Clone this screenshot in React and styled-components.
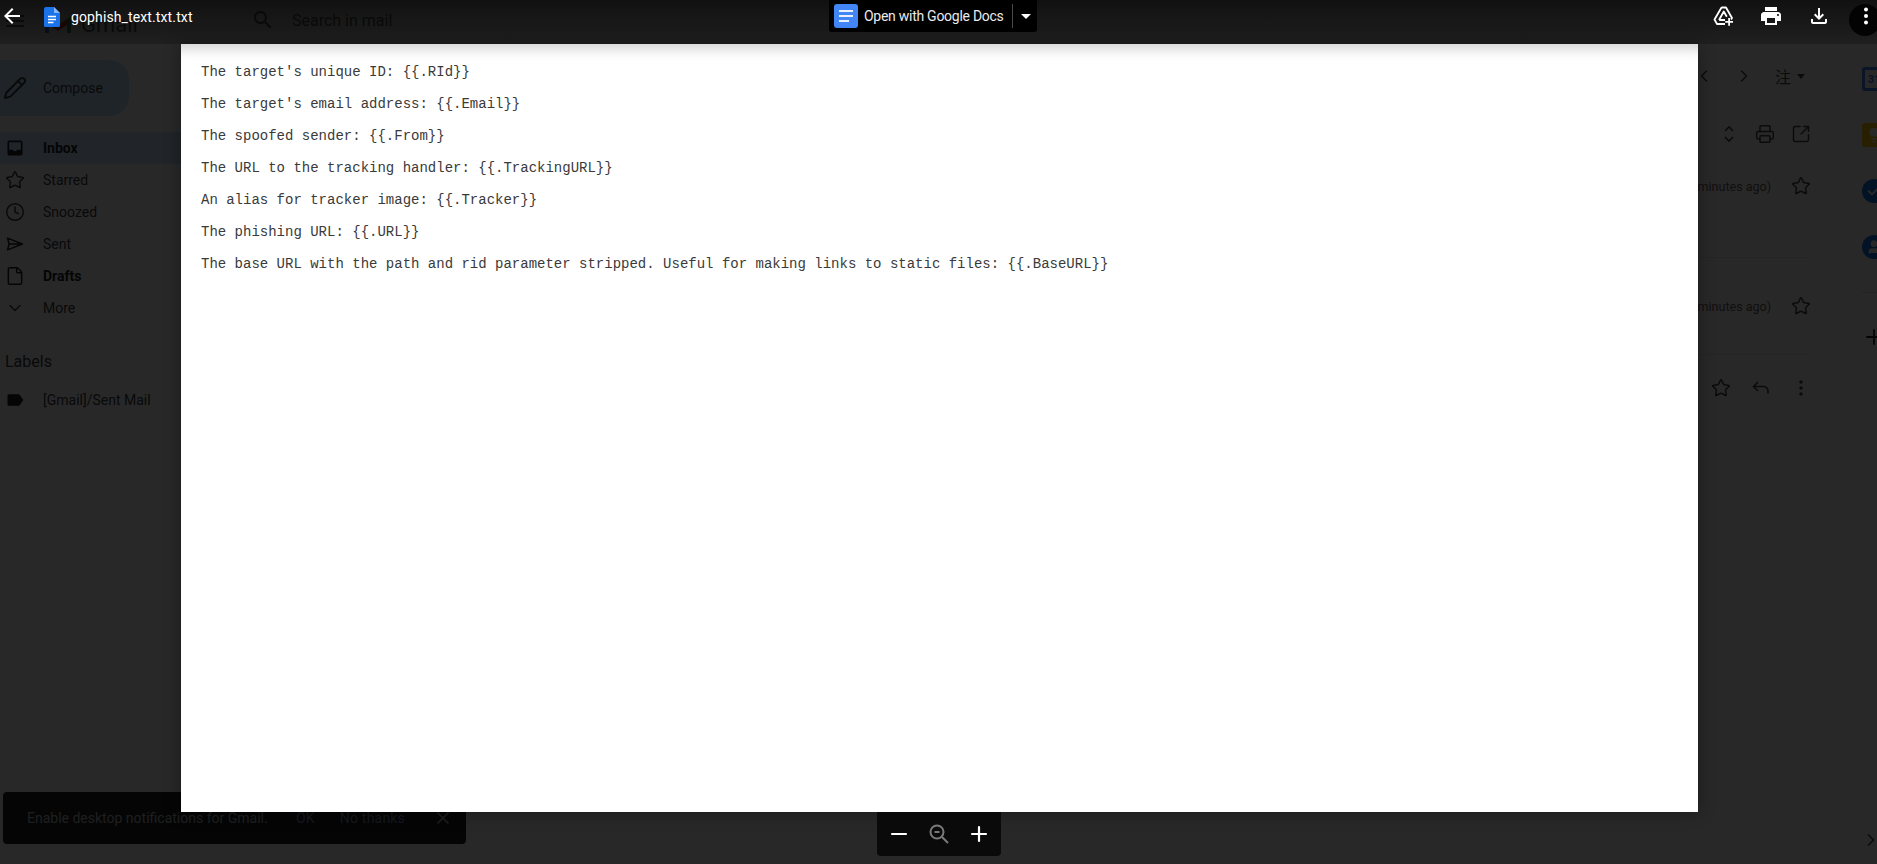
import React from "react";
import styled, { createGlobalStyle } from "styled-components";
import { Clock, File, ChevronDown, ChevronLeft, ChevronRight, Pencil, Star, SquareArrowOutUpRight, Plus, Minus, X, Printer, Check, User, Lightbulb } from "lucide-react";

const Global = createGlobalStyle`
  html, body { margin: 0; padding: 0; height: 100%; overflow: hidden; background: #fff; }
  #root { height: 864px; overflow: hidden; }
  * { box-sizing: border-box; }
`;

const Page = styled.div`
  position: relative;
  width: 1877px;
  height: 864px;
  overflow: hidden;
  background: #fff;
  color: #202124;
  font-family: Roboto, "Noto Sans", sans-serif;
`;

/* --- Gmail behind the viewer --- */
const GmailHeader = styled.header`
  height: 40px;
  display: flex;
  align-items: center;
  padding-left: 3px;
`;
const Burger = styled.svg`
  width: 24px;
  height: 24px;
  fill: #5f6368;
  margin-top: 2px;
`;
const Logo = styled.svg`
  width: 30px;
  height: 24px;
  margin: 6px 0 0 16px;
`;
const LogoText = styled.span`
  font-size: 22px;
  color: #5f6368;
  margin: 8px 0 0 8px;
  width: 170px;
`;
const SearchGlyph = styled.svg`
  width: 24px;
  height: 24px;
  fill: #5f6368;
  margin-right: 17px;
`;
const SearchText = styled.span`
  font-size: 16px;
  color: #5f6368;
  flex: 1;
`;
const Avatar = styled.div`
  width: 32px;
  height: 32px;
  border-radius: 50%;
  background: #202124;
  margin-right: -4px;
`;
const GmailBody = styled.div`
  display: flex;
  height: 824px;
`;
const Sidebar = styled.nav`
  width: 200px;
  flex: none;
  padding-top: 20px;
`;
const Compose = styled.div`
  width: 129px;
  height: 56px;
  border-radius: 0 20px 20px 0;
  background: #c2e7ff;
  display: flex;
  align-items: center;
  gap: 16px;
  padding-left: 3px;
  margin-bottom: 16px;
  font-size: 14px;
  color: #3c4043;
`;
const NavRow = styled.div`
  height: 32px;
  display: flex;
  align-items: center;
  gap: 18px;
  padding-left: 5px;
  font-size: 14px;
  font-weight: ${(p) => (p.$bold ? 700 : 400)};
  color: ${(p) => (p.$bold ? "#202124" : "#3c4043")};
  background: ${(p) => (p.$active ? "#d3e3fd" : "transparent")};
  svg { width: 20px; height: 20px; flex: none; }
`;
const LabelsTitle = styled.div`
  font-size: 16px;
  line-height: 20px;
  padding: 28px 0 12px 5px;
  color: #3c4043;
`;
const Main = styled.main`
  flex: 1;
  min-width: 0;
  padding-right: 44px;
`;
const ToolRow = styled.div`
  height: ${(p) => p.$h}px;
  display: flex;
  align-items: center;
  justify-content: flex-end;
  gap: ${(p) => p.$gap || 0}px;
  border-bottom: ${(p) => (p.$line ? "1px solid #e8eaed" : "none")};
  color: #444746;
  font-size: 12px;
  svg { flex: none; }
`;
const Ago = styled.span`
  color: #5f6368;
  font-size: 12.5px;
  margin-right: 20px;
`;
const NoteGlyph = styled.span`
  font-family: "Noto Sans CJK SC", sans-serif;
  font-size: 16px;
  margin: 0 1px 0 21px;
`;
const Caret = styled.span`
  width: 0;
  height: 0;
  border: 4px solid transparent;
  border-top: 5px solid #444746;
  border-bottom: 0;
  margin: 0 6px 0 5px;
`;
const Rail = styled.aside`
  position: relative;
  width: 22px;
  flex: none;
  padding: 27px 0 0 7px;
  display: flex;
  flex-direction: column;
  align-items: flex-start;
  gap: 32px;
  overflow: hidden;
`;
const RailIcon = styled.div`
  width: 24px;
  height: 24px;
  flex: none;
  border-radius: ${(p) => (p.$round ? "50%" : "3px")};
  background: ${(p) => p.$bg || "transparent"};
  border: ${(p) => (p.$edge ? `3px solid ${p.$edge}` : "none")};
  display: flex;
  align-items: center;
  justify-content: center;
  font-size: 11px;
  font-weight: 700;
  color: #4285f4;
`;
const RailLine = styled.div`
  width: 24px;
  height: 1px;
  background: #dadce0;
  margin-top: 1px;
`;
const RailPlus = styled.div`
  height: 24px;
`;
const CornerChevron = styled.div`
  position: absolute;
  right: -4px;
  bottom: 10px;
  color: #444746;
`;
const Toast = styled.div`
  position: absolute;
  left: 3px;
  top: 792px;
  width: 463px;
  height: 52px;
  border-radius: 4px;
  background: #202124;
  display: flex;
  align-items: center;
  padding-left: 24px;
  font-size: 14px;
  color: #bdc1c6;
`;
const ToastText = styled.span`
  width: 269px;
`;
const ToastLink = styled.span`
  color: #7d94ba;
  letter-spacing: 0.2px;
  margin-right: ${(p) => p.$mr}px;
`;

/* --- File viewer on top --- */
const Viewer = styled.div`
  position: absolute;
  inset: 0;
  background: rgba(0, 0, 0, 0.845);
  display: grid;
  grid-template-rows: 44px 768px 52px;
`;
const ViewerBar = styled.header`
  display: grid;
  grid-template-columns: 829px auto 1fr;
  background: linear-gradient(rgba(0, 0, 0, 0.58), rgba(0, 0, 0, 0.22));
`;
const FileInfo = styled.div`
  display: flex;
  align-items: flex-start;
  padding: 4px 0 0 0;
`;
const BackIcon = styled.svg`
  width: 24px;
  height: 24px;
  fill: #fff;
  margin-right: 17px;
`;
const DocFile = styled.svg`
  width: 18px;
  height: 20px;
  margin: 3px 10px 0 2px;
`;
const FileName = styled.span`
  color: #fff;
  font-size: 14px;
  line-height: 24px;
  margin-top: 1px;
  letter-spacing: 0.12px;
`;
const OpenWith = styled.div`
  width: 208px;
  height: 32px;
  background: #000;
  border-radius: 0 0 3px 3px;
  display: flex;
  align-items: center;
  padding-left: 5px;
  color: #e8eaed;
  font-size: 14px;
  letter-spacing: -0.27px;
`;
const DocsBadge = styled.div`
  width: 24px;
  height: 24px;
  border-radius: 3px;
  background: #4285f4;
  display: flex;
  flex-direction: column;
  justify-content: center;
  gap: 3px;
  padding-left: 5px;
  margin-right: 6px;
`;
const DocsLine = styled.i`
  display: block;
  height: 2px;
  width: ${(p) => p.$w}px;
  background: #e8f0fe;
`;
const Divider = styled.span`
  width: 1px;
  height: 24px;
  background: #4a4a4a;
  margin: 0 8px;
`;
const WhiteCaret = styled.span`
  width: 0;
  height: 0;
  border: 5px solid transparent;
  border-top: 5px solid #fff;
  border-bottom: 0;
`;
const Actions = styled.div`
  display: flex;
  justify-content: flex-end;
  align-items: flex-start;
  gap: 23.5px;
  padding: 4px 0 0 0;
  margin-right: -1px;
  svg { width: 24px; height: 24px; flex: none; fill: #fff; }
`;
const Sheet = styled.section`
  margin: 0 179px 0 181px;
  background: #fff;
  padding: 12px 20px;
  box-shadow: inset 0 16px 14px -12px rgba(0, 0, 0, 0.2), 0 0 16px rgba(0, 0, 0, 0.35);
  font-family: "Liberation Mono", "Courier New", monospace;
  font-size: 14px;
  line-height: 32px;
  color: #3a3a3a;
  white-space: pre;
`;
const ZoomBar = styled.div`
  justify-self: center;
  width: 124px;
  height: 44px;
  background: #0a0a0a;
  border-radius: 0 0 4px 4px;
  display: flex;
  align-items: center;
  justify-content: center;
  gap: 16px;
  margin-left: 1px;
  color: #fff;
`;
const ZoomMag = styled.svg`
  width: 24px;
  height: 24px;
  fill: none;
  stroke: #7a7a7a;
  stroke-width: 2;
`;

const lines = [
  "The target's unique ID: {{.RId}}",
  "The target's email address: {{.Email}}",
  "The spoofed sender: {{.From}}",
  "The URL to the tracking handler: {{.TrackingURL}}",
  "An alias for tracker image: {{.Tracker}}",
  "The phishing URL: {{.URL}}",
  "The base URL with the path and rid parameter stripped. Useful for making links to static files: {{.BaseURL}}",
];

const StarIcon = () => <Star size={20} strokeWidth={1.8} color="#444746" />;

export default function App() {
  return (
    <Page>
      <Global />
      <GmailHeader>
        <Burger viewBox="0 0 24 24"><path d="M3 18h18v-2H3v2zm0-5h18v-2H3v2zm0-7v2h18V6H3z" /></Burger>
        <Logo viewBox="0 0 30 24">
          <path d="M2 22V5l4 3v14z" fill="#4285f4" />
          <path d="M24 22V8l4-3v17z" fill="#34a853" />
          <path d="M6 8v6l9 6 9-6V8l-9 6z" fill="#ea4335" />
        </Logo>
        <LogoText>Gmail</LogoText>
        <SearchGlyph viewBox="0 0 24 24"><path d="M15.500 14h-.79l-.28-.27C15.410 12.590 16 11.110 16 9.500 16 5.910 13.090 3 9.500 3S3 5.910 3 9.500 5.910 16 9.500 16c1.610 0 3.090-.59 4.230-1.570l.27.28v.79l5 4.990L20.490 19l-4.990-5zm-6 0C7.010 14 5 11.990 5 9.500S7.010 5 9.500 5 14 7.010 14 9.500 11.990 14 9.500 14z" /></SearchGlyph>
        <SearchText>Search in mail</SearchText>
        <Avatar />
      </GmailHeader>
      <GmailBody>
        <Sidebar>
          <Compose><Pencil size={24} strokeWidth={2} />Compose</Compose>
          <NavRow $active $bold>
            <svg viewBox="0 0 24 24" fill="#202124"><path d="M19 3H5c-1.100 0-2 .9-2 2v14c0 1.100.9 2 2 2h14c1.100 0 2-.9 2-2V5c0-1.100-.9-2-2-2zm0 11h-4.990c0 1.100-.9 2-2 2s-2-.9-2-2H5V5h14v9z" /></svg>
            Inbox
          </NavRow>
          <NavRow><Star strokeWidth={1.8} />Starred</NavRow>
          <NavRow><Clock strokeWidth={1.8} />Snoozed</NavRow>
          <NavRow>
            <svg viewBox="0 0 24 24" fill="none" stroke="#202124" strokeWidth="1.800" strokeLinejoin="round"><path d="M3 5l18 7-18 7 2-7zM5 12h16" /></svg>
            Sent
          </NavRow>
          <NavRow $bold><File strokeWidth={1.8} />Drafts</NavRow>
          <NavRow><ChevronDown strokeWidth={1.8} />More</NavRow>
          <LabelsTitle>Labels</LabelsTitle>
          <NavRow>
            <svg viewBox="0 0 24 24" fill="#202124"><path d="M17.630 5.840C17.270 5.330 16.670 5 16 5L5 5.010C3.900 5.010 3 5.900 3 7v10c0 1.100.9 1.990 2 1.990L16 19c.67 0 1.270-.33 1.630-.84L22 12l-4.370-6.160z" /></svg>
            [Gmail]/Sent Mail
          </NavRow>
        </Sidebar>
        <Main>
          <ToolRow $h={72}>
            <ChevronLeft size={20} strokeWidth={1.8} />
            <ChevronRight size={20} strokeWidth={1.8} style={{ marginLeft: 20 }} />
            <NoteGlyph>注</NoteGlyph>
            <Caret />
          </ToolRow>
          <ToolRow $h={44} $gap={16}>
            <svg width="20" height="20" viewBox="0 0 20 20" fill="none" stroke="#444746" strokeWidth="1.600"><path d="M6 7l4-4 4 4M6 13l4 4 4-4" /></svg>
            <Printer size={20} strokeWidth={1.8} />
            <SquareArrowOutUpRight size={20} strokeWidth={1.8} />
          </ToolRow>
          <ToolRow $h={60}><Ago>(2 minutes ago)</Ago><StarIcon /></ToolRow>
          <ToolRow $h={42} $line />
          <ToolRow $h={97} $line><Ago>(2 minutes ago)</Ago><StarIcon /></ToolRow>
          <ToolRow $h={66} $gap={20}>
            <StarIcon />
            <svg width="20" height="20" viewBox="0 0 20 20" fill="none" stroke="#444746" strokeWidth="1.600"><path d="M7 4L2.500 8.500 7 13M3 8.500h9c3 0 5 2 5 5v2" /></svg>
            <svg width="20" height="20" viewBox="0 0 20 20" fill="#444746"><circle cx="10" cy="4" r="1.700" /><circle cx="10" cy="10" r="1.700" /><circle cx="10" cy="16" r="1.700" /></svg>
          </ToolRow>
        </Main>
        <Rail>
          <RailIcon $edge="#4285f4">31</RailIcon>
          <RailIcon $bg="#fbbc04"><Lightbulb size={16} color="#fff" fill="#fff" /></RailIcon>
          <RailIcon $round $bg="#1a73e8"><Check size={16} color="#fff" strokeWidth={3} /></RailIcon>
          <RailIcon $round $bg="#1a73e8"><User size={16} color="#fff" fill="#fff" /></RailIcon>
          <RailLine />
          <RailPlus><Plus size={24} color="#202124" strokeWidth={1.8} /></RailPlus>
          <CornerChevron><ChevronRight size={20} /></CornerChevron>
        </Rail>
      </GmailBody>
      <Toast>
        <ToastText>Enable desktop notifications for Gmail.</ToastText>
        <ToastLink $mr={25}>OK</ToastLink>
        <ToastLink $mr={28}>No thanks</ToastLink>
        <X size={20} color="#bdc1c6" />
      </Toast>

      <Viewer>
        <ViewerBar>
          <FileInfo>
            <BackIcon viewBox="0 0 24 24"><path d="M20 11H7.830l5.590-5.590L12 4l-8 8 8 8 1.410-1.410L7.830 13H20v-2z" /></BackIcon>
            <DocFile viewBox="0 0 16 20">
              <path d="M2 0h8l6 6v12.500a1.500 1.500 0 0 1-1.500 1.500h-13A1.500 1.500 0 0 1 0 18.500V2a2 2 0 0 1 2-2z" fill="#1a73e8" />
              <path d="M10 0l6 6h-6z" fill="#8ab4f8" />
              <path d="M4 9.500h8M4 12.500h8M4 15.500h5.500" stroke="#fff" strokeWidth="1.300" />
            </DocFile>
            <FileName>gophish_text.txt.txt</FileName>
          </FileInfo>
          <OpenWith>
            <DocsBadge><DocsLine $w={14} /><DocsLine $w={14} /><DocsLine $w={10} /></DocsBadge>
            Open with Google Docs
            <Divider />
            <WhiteCaret />
          </OpenWith>
          <Actions>
            <svg viewBox="0 0 24 24">
              <path d="M9.500 3.500h4.500l6 10.500-1 1.500M8 20H5l-2.500-4.500 7-12M8 20h5M7 16l4.800-8.500 3 5.300M7 16h6" fill="none" stroke="#fff" strokeWidth="1.800" strokeLinejoin="round" />
              <path d="M18 15v3h3v1.800h-3v3h-1.800v-3h-3V18h3v-3z" transform="translate(0 -1)" />
            </svg>
            <svg viewBox="0 0 24 24"><path d="M19 8H5c-1.660 0-3 1.340-3 3v6h4v4h12v-4h4v-6c0-1.660-1.340-3-3-3zm-3 11H8v-5h8v5zm3-7c-.55 0-1-.45-1-1s.45-1 1-1 1 .45 1 1-.45 1-1 1zm-1-9H6v4h12V3z" /></svg>
            <svg viewBox="0 0 24 24"><path d="M18 15v3H6v-3H4v3c0 1.100.9 2 2 2h12c1.100 0 2-.9 2-2v-3h-2zm-1-4l-1.410-1.410L13 12.170V4h-2v8.170L8.410 9.590 7 11l5 5 5-5z" /></svg>
            <svg viewBox="0 0 24 24"><circle cx="12" cy="5.500" r="2" /><circle cx="12" cy="12" r="2" /><circle cx="12" cy="18.500" r="2" /></svg>
          </Actions>
        </ViewerBar>
        <Sheet>{lines.map((l) => <div key={l}>{l}</div>)}</Sheet>
        <ZoomBar>
          <Minus size={24} strokeWidth={2.2} />
          <ZoomMag viewBox="0 0 24 24"><circle cx="10" cy="10" r="6.500" /><path d="M15 15l6 6M7.500 10h5" /></ZoomMag>
          <Plus size={24} strokeWidth={2.2} />
        </ZoomBar>
      </Viewer>
    </Page>
  );
}
